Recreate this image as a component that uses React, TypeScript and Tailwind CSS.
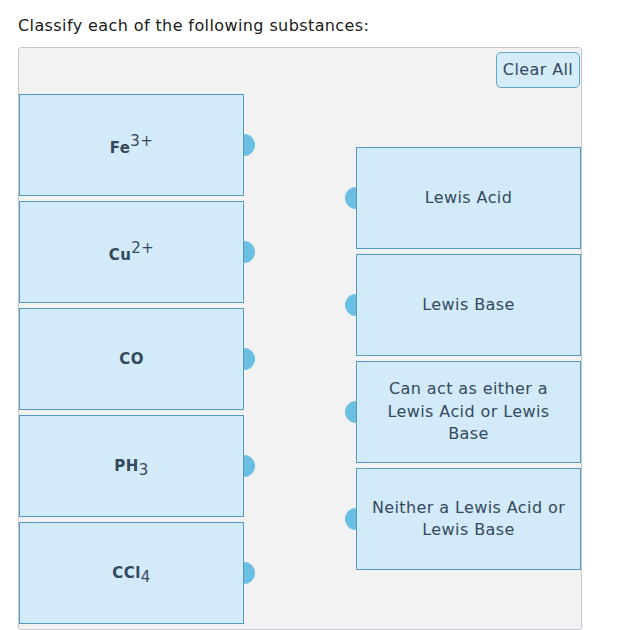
import React from "react";

type Item = { key: string; node: React.ReactNode; raised?: boolean };

const substances: Item[] = [
  {
    key: "fe",
    raised: true,
    node: (
      <>
        Fe<span className="relative -top-[7px] font-normal text-[15px]">3+</span>
      </>
    ),
  },
  {
    key: "cu",
    raised: true,
    node: (
      <>
        Cu<span className="relative -top-[7px] font-normal text-[15px]">2+</span>
      </>
    ),
  },
  { key: "co", node: <>CO</> },
  {
    key: "ph3",
    node: (
      <>
        PH<span className="relative top-[4px] font-normal text-[15px]">3</span>
      </>
    ),
  },
  {
    key: "ccl4",
    node: (
      <>
        CCl<span className="relative top-[4px] font-normal text-[15px]">4</span>
      </>
    ),
  },
];

const categories: string[][] = [
  ["Lewis Acid"],
  ["Lewis Base"],
  ["Can act as either a", "Lewis Acid or Lewis", "Base"],
  ["Neither a Lewis Acid or", "Lewis Base"],
];

function SourceCard({ item }: { item: Item }) {
  return (
    <div className="relative h-[102px] w-[225px] border border-[#5399c2] bg-[#d3eaf8] flex items-center justify-center">
      <div
        className={`text-[15px] font-bold text-[#34495e] leading-[20px] tracking-[0.4px] ${
          item.raised ? "mt-[6px]" : ""
        }`}
      >
        {item.node}
      </div>
      <div className="absolute right-[-12px] top-1/2 -translate-y-1/2 h-[22px] w-[11px] rounded-r-full bg-[#6bbfe2]" />
    </div>
  );
}

function TargetCard({ lines }: { lines: string[] }) {
  return (
    <div className="relative h-[102px] w-[225px] border border-[#5399c2] bg-[#d3eaf8] flex items-center justify-center">
      <div className="text-[16px] text-[#34495e] leading-[22.5px] tracking-[0.4px] text-center">
        {lines.map((l) => (
          <div key={l}>{l}</div>
        ))}
      </div>
      <div className="absolute left-[-12px] top-1/2 -translate-y-1/2 h-[22px] w-[11px] rounded-l-full bg-[#6bbfe2]" />
    </div>
  );
}

export default function App() {
  return (
    <div
      className="w-[630px] h-[630px] bg-white overflow-hidden"
      style={{ fontFamily: "Verdana, 'DejaVu Sans', sans-serif" }}
    >
      <div className="pl-[18px] pt-[16px] text-[16px] leading-[20px] tracking-[0.4px] text-[#1a1a1a]">
        Classify each of the following substances:
      </div>
      <div className="ml-[18px] mt-[11px] w-[564px] h-[583px] border border-[#c3c8ce] rounded-[3px] bg-[#f2f2f2]">
        <div className="flex justify-end pt-[4px] pr-[1px]">
          <button className="h-[36px] w-[84px] rounded-[5px] border border-[#5fa6d0] bg-[#d4ebf8] text-[16px] tracking-[0.4px] text-[#34495e]">
            Clear All
          </button>
        </div>
        <div className="flex justify-between mt-[6px]">
          <div className="flex flex-col gap-[5px]">
            {substances.map((s) => (
              <SourceCard key={s.key} item={s} />
            ))}
          </div>
          <div className="flex flex-col gap-[5px] mt-[53px]">
            {categories.map((c) => (
              <TargetCard key={c.join(" ")} lines={c} />
            ))}
          </div>
        </div>
      </div>
    </div>
  );
}
